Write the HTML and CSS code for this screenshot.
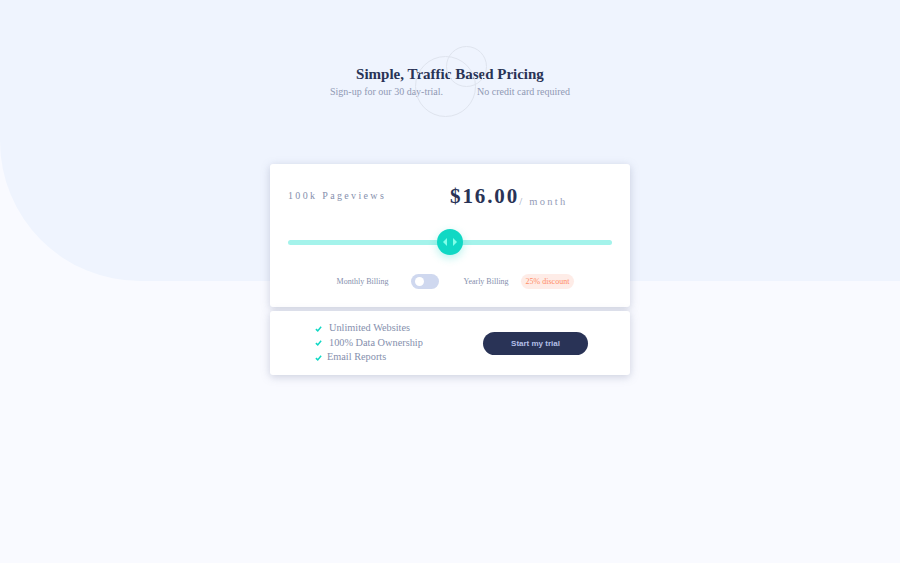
FILE: index.html
```html
<!DOCTYPE html>
<html lang="en">
<head>
<meta charset="utf-8">
<title>Interactive pricing component</title>
<link rel="stylesheet" href="styles.css">
</head>
<body>
<main class="page">
  <header class="intro">
    <span class="ring ring-big"></span>
    <span class="ring ring-small"></span>
    <h1 class="title">Simple, Traffic Based Pricing</h1>
    <p class="subtitle"><span>Sign-up for our 30 day-trial.</span><span>No credit card required</span></p>
  </header>

  <section class="card card-top">
    <div class="price-row">
      <span class="views">100k Pageviews</span>
      <span class="price"><strong>$16.00</strong><span class="per">/ month</span></span>
    </div>
    <div class="slider">
      <div class="track"></div>
      <div class="thumb">
        <svg width="14" height="8" viewBox="0 0 14 8"><path d="M4 0v8L0 4z M10 0v8l4-4z" fill="#80ffe9"/></svg>
      </div>
    </div>
    <div class="billing">
      <span class="bill-label">Monthly Billing</span>
      <span class="toggle"><span class="knob"></span></span>
      <span class="bill-label">Yearly Billing</span>
      <span class="badge">25% discount</span>
    </div>
  </section>

  <section class="card card-bottom">
    <ul class="features">
      <li><svg class="check" width="7" height="6" viewBox="0 0 9 8"><path d="M1 4.2 3.5 6.5 8 1" fill="none" stroke="#10d8c4" stroke-width="2"/></svg><span class="f1">Unlimited Websites</span></li>
      <li><svg class="check" width="7" height="6" viewBox="0 0 9 8"><path d="M1 4.2 3.5 6.5 8 1" fill="none" stroke="#10d8c4" stroke-width="2"/></svg><span class="f1">100% Data Ownership</span></li>
      <li><svg class="check" width="7" height="6" viewBox="0 0 9 8"><path d="M1 4.2 3.5 6.5 8 1" fill="none" stroke="#10d8c4" stroke-width="2"/></svg><span class="f3">Email Reports</span></li>
    </ul>
    <button class="cta">Start my trial</button>
  </section>
</main>
</body>
</html>
```

FILE: styles.css
```css
* { box-sizing: border-box; }
html, body { margin: 0; padding: 0; }
body {
  background: #f9faff;
  font-family: "Liberation Serif", "Times New Roman", serif;
  min-height: 563px;
}
.page {
  position: relative;
  display: flex;
  flex-direction: column;
  align-items: center;
  padding-top: 64px;
}
.page::before {
  content: "";
  position: absolute;
  left: 0; top: 0; right: 0;
  height: 281px;
  background: #eff4fe;
  border-bottom-left-radius: 140px;
  z-index: 0;
}
.intro {
  position: relative;
  z-index: 1;
  text-align: center;
}
.ring {
  position: absolute;
  border: 1px solid #dfe4ee;
  border-radius: 50%;
}
.ring-big { width: 61px; height: 61px; left: 85px; top: -8px; }
.ring-small { width: 41px; height: 41px; left: 116px; top: -18px; }
.title {
  margin: 0;
  font-size: 15px;
  font-weight: 700;
  color: #293356;
  line-height: 20px;
}
.subtitle {
  margin: 0;
  font-size: 10px;
  color: #8f99b4;
  line-height: 15px;
  display: flex;
  gap: 34px;
  justify-content: center;
}
.card {
  position: relative;
  z-index: 1;
  width: 360px;
  background: #fff;
  border-radius: 3px;
  box-shadow: 0 2px 8px rgba(120, 130, 160, 0.35);
}
.card-top {
  margin-top: 65px;
  padding: 20px 18px 18px;
}
.price-row {
  display: flex;
  align-items: center;
  height: 24px;
}
.views {
  align-self: flex-start;
  margin-top: 6px;
  width: 162px;
  font-size: 10px;
  letter-spacing: 2.35px;
  color: #858fad;
}
.price strong {
  font-size: 21px;
  letter-spacing: 1.9px;
  color: #293356;
}
.per {
  font-size: 10.5px;
  letter-spacing: 2.3px;
  color: #959db8;
  margin-left: 0;
  position: relative;
  top: 2px;
}
.slider {
  position: relative;
  margin-top: 21px;
  height: 26px;
  display: flex;
  align-items: center;
}
.track {
  width: 100%;
  height: 5px;
  border-radius: 3px;
  background: #a4f3eb;
}
.thumb {
  position: absolute;
  left: 149px;
  top: 0;
  width: 26px;
  height: 26px;
  border-radius: 50%;
  background: #10d8c4;
  display: flex;
  align-items: center;
  justify-content: center;
  box-shadow: 0 3px 8px rgba(16, 216, 196, 0.3);
}
.billing {
  margin-top: 19px;
  display: flex;
  align-items: center;
  justify-content: center;
  font-size: 8px;
  color: #858fad;
  padding-left: 11px;
}
.toggle {
  width: 28px;
  height: 15px;
  border-radius: 8px;
  background: #cfd8ef;
  margin: 0 24px 0 23px;
  display: flex;
  align-items: center;
  padding-left: 4px;
}
.knob {
  width: 9px;
  height: 9px;
  border-radius: 50%;
  background: #fff;
}
.badge {
  margin-left: 12px;
  background: #feece7;
  color: #ff8c66;
  border-radius: 8px;
  padding: 0 5px;
  height: 15px;
  line-height: 15px;
}
.card-bottom {
  margin-top: 4px;
  height: 64px;
  display: flex;
  align-items: center;
  padding-left: 45px;
}
.features {
  list-style: none;
  margin: 0;
  padding: 0;
  width: 168px;
  font-size: 10.3px;
  color: #858fad;
  line-height: 14.5px;
}
.features li {
  display: flex;
  align-items: center;
}
.check { margin-right: 6px; }
.f1 { margin-left: 1px; }
.f3 { margin-left: -1px; }
.cta {
  width: 105px;
  height: 23px;
  border: 0;
  border-radius: 12px;
  background: #293356;
  color: #b3bfe6;
  font-family: "Liberation Sans", Arial, sans-serif;
  font-weight: 700;
  font-size: 8px;
  padding: 0;
}
```
